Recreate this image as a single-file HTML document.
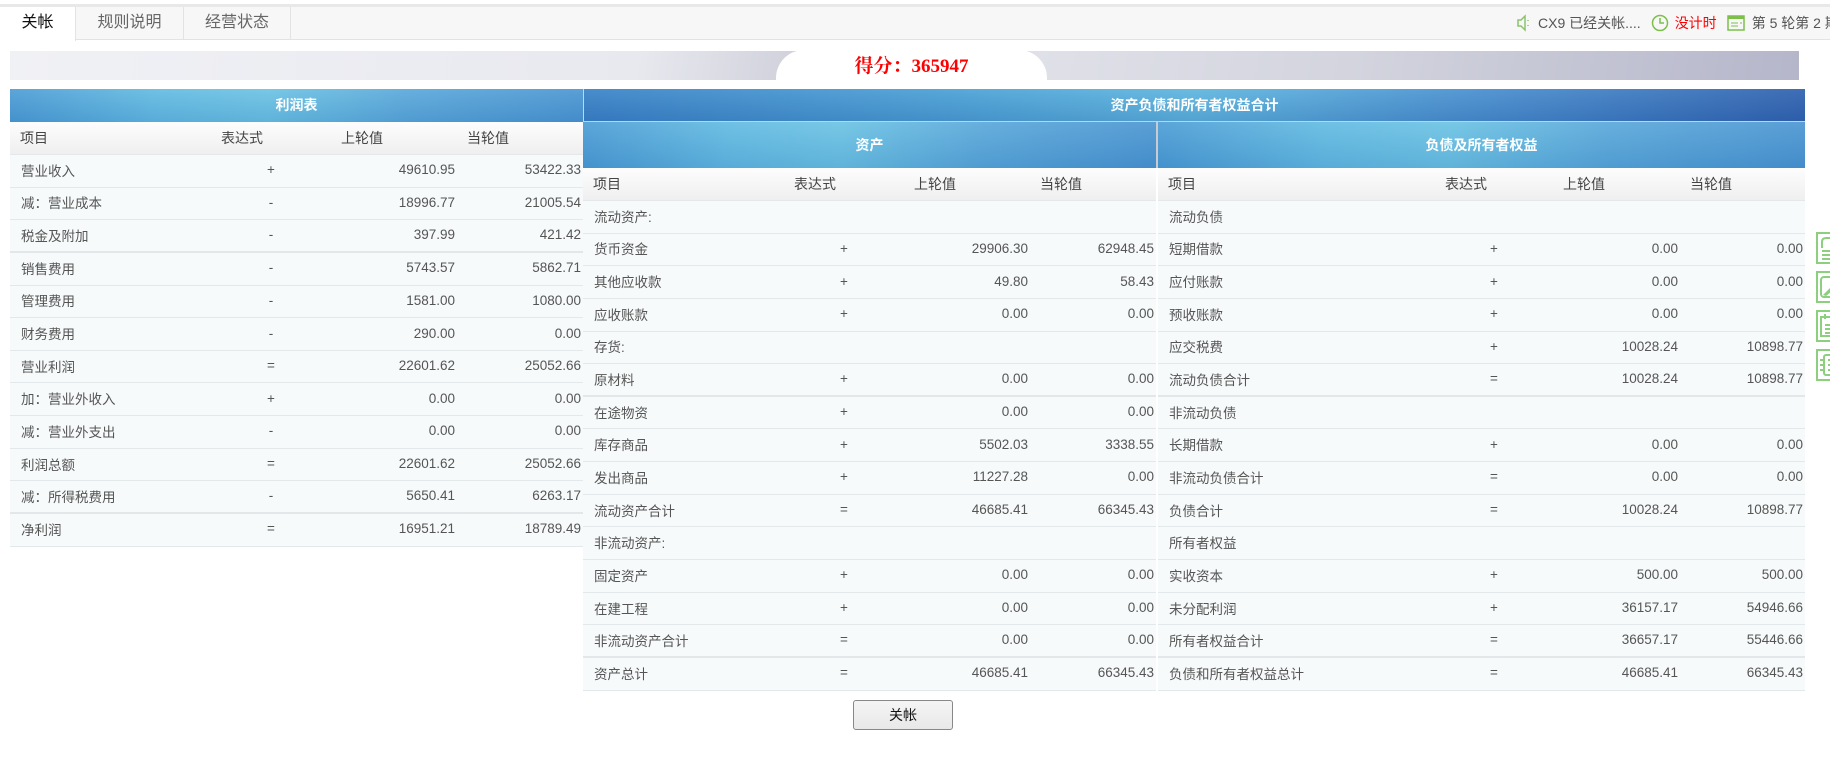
<!DOCTYPE html>
<html><head><meta charset="utf-8">
<style>
*{margin:0;padding:0;box-sizing:border-box}
body{width:1830px;height:779px;background:#fff;font-family:"Liberation Sans","Noto Sans CJK SC",sans-serif;color:#555;font-size:14px;position:relative;overflow:hidden}
.abs{position:absolute}
.topline{left:0;top:4px;width:1830px;height:3px;background:#e8e8e8}
.bar{left:0;top:7px;width:1830px;height:33px;background:#f7f7f7;border-bottom:1px solid #e3e3e3}
.tab{top:7px;height:33px;line-height:32px;font-size:16px;color:#666;text-align:center;border-right:1px solid #e3e3e3}
.tab.on{background:#fff;color:#111;height:34px}
.banner{left:10px;top:51px;width:1789px;height:29px;background:linear-gradient(100deg,#f0f1f5 0%,#e8e9ef 35%,#cdced9 45%,#e4e5ec 50%,#d3d4de 75%,#b5b6ca 100%)}
.pill{left:776px;top:50px;width:271px;height:31px;background:#fff;border-radius:28px 28px 0 0;text-align:center;color:#f00;font:bold 19px "Liberation Serif","Noto Serif CJK SC",serif;line-height:34px}
.bh{color:#fff;font-weight:bold;font-size:14px;text-align:center}
.b1{background:linear-gradient(180deg,rgba(255,255,255,.08),rgba(0,60,140,.12)),linear-gradient(90deg,#4d9dd5 0%,#63bbe2 25%,#6cc3e4 45%,#5aa8da 70%,#4c97d2 100%)}
.b2{background:linear-gradient(180deg,rgba(255,255,255,.05),rgba(0,40,120,.15)),linear-gradient(90deg,#3e86c9 0%,#4fa3d7 30%,#62b8e0 50%,#4b8fcf 75%,#3466b1 100%)}
.hdr{display:flex;height:33px;align-items:center;background:linear-gradient(#fdfdfd,#efefef);border-bottom:1px solid #e4e8ea;font-size:14px;color:#444;padding-bottom:1px}
.hdr div{padding-left:10px}
.r{display:flex;height:32.65px;align-items:center;background:#f7fafb;border-bottom:1px solid #e3e8ea;font-size:13.5px;padding-bottom:2px}
.r.t{border-bottom:2px solid #e3e7ea}
.r div{white-space:nowrap}
.a{padding-left:11px}
.e{text-align:center}
.v{text-align:right;padding-right:2px}
.L .x1{width:201px}.L .x2{width:120px}.L .x3{width:126px}.L .x4{width:126px}
.R .x1{width:277px}.R .x2{width:118px}.R .x3{width:127px}.R .x4{width:125px}
.btn{left:853px;top:700px;width:100px;height:30px;border:1px solid #888;border-radius:3px;background:linear-gradient(#f5f5f5,#e8e8e8);text-align:center;line-height:28px;font-size:14px;color:#111}
.side{left:1816px;width:30px;height:32px;border:2px solid #8ccf7e;background:#fff}
</style></head><body>
<div class="abs topline"></div>
<div class="abs bar"></div>
<div class="abs tab on" style="left:0;width:76px">关帐</div>
<div class="abs tab" style="left:76px;width:108px">规则说明</div>
<div class="abs tab" style="left:184px;width:107px">经营状态</div>

<div class="abs" style="left:1516px;top:12px;height:22px;display:flex;align-items:center;font-size:14px;color:#555;white-space:nowrap">
<svg width="16" height="18" viewBox="0 0 16 18"><path d="M2 6h3l4-4v14l-4-4H2z" fill="none" stroke="#8cc36a" stroke-width="1.5"/><path d="M12 6v1M12 11v1" stroke="#8cc36a" stroke-width="1.5"/></svg>
<span style="margin-left:6px">CX9 已经关帐....</span>
<svg style="margin-left:10px" width="18" height="18" viewBox="0 0 18 18"><circle cx="9" cy="9" r="7.5" fill="none" stroke="#7cc04a" stroke-width="1.5"/><path d="M9 4v5h4" fill="none" stroke="#7cc04a" stroke-width="1.5"/></svg>
<span style="margin-left:6px;color:#f00">没计时</span>
<svg style="margin-left:10px" width="18" height="16" viewBox="0 0 18 16"><rect x="1" y="1" width="16" height="14" fill="none" stroke="#7cc04a" stroke-width="1.5"/><rect x="1" y="1" width="16" height="3" fill="#7cc04a"/><path d="M4 8h7M4 11h7M13 8h2" stroke="#7cc04a"/></svg>
<span style="margin-left:7px">第 5 轮第 2 期</span>
</div>

<div class="abs banner"></div>
<div class="abs pill">得分：365947</div>

<div class="abs L" style="left:10px;top:89px;width:573px">
<div class="bh b1" style="height:33px;line-height:33px">利润表</div>
<div class="hdr"><div class="x1">项目</div><div class="x2">表达式</div><div class="x3">上轮值</div><div class="x4">当轮值</div></div>
<div class="r"><div class="x1 a">营业收入</div><div class="x2 e">+</div><div class="x3 v">49610.95</div><div class="x4 v">53422.33</div></div>
<div class="r"><div class="x1 a">减：营业成本</div><div class="x2 e">-</div><div class="x3 v">18996.77</div><div class="x4 v">21005.54</div></div>
<div class="r t"><div class="x1 a">税金及附加</div><div class="x2 e">-</div><div class="x3 v">397.99</div><div class="x4 v">421.42</div></div>
<div class="r"><div class="x1 a">销售费用</div><div class="x2 e">-</div><div class="x3 v">5743.57</div><div class="x4 v">5862.71</div></div>
<div class="r"><div class="x1 a">管理费用</div><div class="x2 e">-</div><div class="x3 v">1581.00</div><div class="x4 v">1080.00</div></div>
<div class="r"><div class="x1 a">财务费用</div><div class="x2 e">-</div><div class="x3 v">290.00</div><div class="x4 v">0.00</div></div>
<div class="r"><div class="x1 a">营业利润</div><div class="x2 e">=</div><div class="x3 v">22601.62</div><div class="x4 v">25052.66</div></div>
<div class="r"><div class="x1 a">加：营业外收入</div><div class="x2 e">+</div><div class="x3 v">0.00</div><div class="x4 v">0.00</div></div>
<div class="r"><div class="x1 a">减：营业外支出</div><div class="x2 e">-</div><div class="x3 v">0.00</div><div class="x4 v">0.00</div></div>
<div class="r"><div class="x1 a">利润总额</div><div class="x2 e">=</div><div class="x3 v">22601.62</div><div class="x4 v">25052.66</div></div>
<div class="r t"><div class="x1 a">减：所得税费用</div><div class="x2 e">-</div><div class="x3 v">5650.41</div><div class="x4 v">6263.17</div></div>
<div class="r"><div class="x1 a">净利润</div><div class="x2 e">=</div><div class="x3 v">16951.21</div><div class="x4 v">18789.49</div></div>
</div>

<div class="abs bh b2" style="left:583px;top:89px;width:1222px;height:33px;line-height:33px;border-left:1px solid #c9d6e0;border-bottom:1px solid #c9d0d8">资产负债和所有者权益合计</div>
<div class="abs bh b1" style="left:583px;top:122px;width:573px;height:46px;line-height:46px">资产</div>
<div class="abs" style="left:1156px;top:122px;width:2px;height:46px;background:#c8ccd2"></div>
<div class="abs bh b1" style="left:1158px;top:122px;width:647px;height:46px;line-height:46px">负债及所有者权益</div>

<div class="abs L" style="left:583px;top:168px;width:573px">
<div class="hdr"><div class="x1">项目</div><div class="x2">表达式</div><div class="x3">上轮值</div><div class="x4">当轮值</div></div>
<div class="r"><div class="x1 a">流动资产:</div></div>
<div class="r"><div class="x1 a">货币资金</div><div class="x2 e">+</div><div class="x3 v">29906.30</div><div class="x4 v">62948.45</div></div>
<div class="r"><div class="x1 a">其他应收款</div><div class="x2 e">+</div><div class="x3 v">49.80</div><div class="x4 v">58.43</div></div>
<div class="r"><div class="x1 a">应收账款</div><div class="x2 e">+</div><div class="x3 v">0.00</div><div class="x4 v">0.00</div></div>
<div class="r"><div class="x1 a">存货:</div></div>
<div class="r t"><div class="x1 a">原材料</div><div class="x2 e">+</div><div class="x3 v">0.00</div><div class="x4 v">0.00</div></div>
<div class="r"><div class="x1 a">在途物资</div><div class="x2 e">+</div><div class="x3 v">0.00</div><div class="x4 v">0.00</div></div>
<div class="r"><div class="x1 a">库存商品</div><div class="x2 e">+</div><div class="x3 v">5502.03</div><div class="x4 v">3338.55</div></div>
<div class="r"><div class="x1 a">发出商品</div><div class="x2 e">+</div><div class="x3 v">11227.28</div><div class="x4 v">0.00</div></div>
<div class="r"><div class="x1 a">流动资产合计</div><div class="x2 e">=</div><div class="x3 v">46685.41</div><div class="x4 v">66345.43</div></div>
<div class="r"><div class="x1 a">非流动资产:</div></div>
<div class="r"><div class="x1 a">固定资产</div><div class="x2 e">+</div><div class="x3 v">0.00</div><div class="x4 v">0.00</div></div>
<div class="r"><div class="x1 a">在建工程</div><div class="x2 e">+</div><div class="x3 v">0.00</div><div class="x4 v">0.00</div></div>
<div class="r t"><div class="x1 a">非流动资产合计</div><div class="x2 e">=</div><div class="x3 v">0.00</div><div class="x4 v">0.00</div></div>
<div class="r"><div class="x1 a">资产总计</div><div class="x2 e">=</div><div class="x3 v">46685.41</div><div class="x4 v">66345.43</div></div>
</div>

<div class="abs R" style="left:1158px;top:168px;width:647px">
<div class="hdr"><div class="x1">项目</div><div class="x2">表达式</div><div class="x3">上轮值</div><div class="x4">当轮值</div></div>
<div class="r"><div class="x1 a">流动负债</div></div>
<div class="r"><div class="x1 a">短期借款</div><div class="x2 e">+</div><div class="x3 v">0.00</div><div class="x4 v">0.00</div></div>
<div class="r"><div class="x1 a">应付账款</div><div class="x2 e">+</div><div class="x3 v">0.00</div><div class="x4 v">0.00</div></div>
<div class="r"><div class="x1 a">预收账款</div><div class="x2 e">+</div><div class="x3 v">0.00</div><div class="x4 v">0.00</div></div>
<div class="r"><div class="x1 a">应交税费</div><div class="x2 e">+</div><div class="x3 v">10028.24</div><div class="x4 v">10898.77</div></div>
<div class="r t"><div class="x1 a">流动负债合计</div><div class="x2 e">=</div><div class="x3 v">10028.24</div><div class="x4 v">10898.77</div></div>
<div class="r"><div class="x1 a">非流动负债</div></div>
<div class="r"><div class="x1 a">长期借款</div><div class="x2 e">+</div><div class="x3 v">0.00</div><div class="x4 v">0.00</div></div>
<div class="r"><div class="x1 a">非流动负债合计</div><div class="x2 e">=</div><div class="x3 v">0.00</div><div class="x4 v">0.00</div></div>
<div class="r"><div class="x1 a">负债合计</div><div class="x2 e">=</div><div class="x3 v">10028.24</div><div class="x4 v">10898.77</div></div>
<div class="r"><div class="x1 a">所有者权益</div></div>
<div class="r"><div class="x1 a">实收资本</div><div class="x2 e">+</div><div class="x3 v">500.00</div><div class="x4 v">500.00</div></div>
<div class="r"><div class="x1 a">未分配利润</div><div class="x2 e">+</div><div class="x3 v">36157.17</div><div class="x4 v">54946.66</div></div>
<div class="r t"><div class="x1 a">所有者权益合计</div><div class="x2 e">=</div><div class="x3 v">36657.17</div><div class="x4 v">55446.66</div></div>
<div class="r"><div class="x1 a">负债和所有者权益总计</div><div class="x2 e">=</div><div class="x3 v">46685.41</div><div class="x4 v">66345.43</div></div>
</div>

<div class="abs side" style="top:232px"><svg width="26" height="28" viewBox="0 0 26 28"><path d="M4 14V8q0-4 4-4h10M4 17h18M4 21h18M4 25h18" fill="none" stroke="#8ccf7e" stroke-width="2"/></svg></div>
<div class="abs side" style="top:271px"><svg width="26" height="28" viewBox="0 0 26 28"><rect x="3" y="4" width="18" height="20" rx="3" fill="none" stroke="#8ccf7e" stroke-width="2"/><path d="M5 22l10-10 3 3-10 8z" fill="#8ccf7e"/></svg></div>
<div class="abs side" style="top:310px"><svg width="26" height="28" viewBox="0 0 26 28"><rect x="3" y="5" width="18" height="19" fill="none" stroke="#8ccf7e" stroke-width="2"/><path d="M7 2v5M17 2v5M7 13h12M7 17h12M7 21h12" stroke="#8ccf7e" stroke-width="2"/></svg></div>
<div class="abs side" style="top:349px"><svg width="26" height="28" viewBox="0 0 26 28"><rect x="6" y="4" width="14" height="20" rx="2" fill="none" stroke="#8ccf7e" stroke-width="2"/><path d="M2 9h4M2 14h4M2 19h4M10 9h8M10 14h8M10 19h8" stroke="#8ccf7e" stroke-width="2"/></svg></div>

<div class="abs btn">关帐</div>
</body></html>
